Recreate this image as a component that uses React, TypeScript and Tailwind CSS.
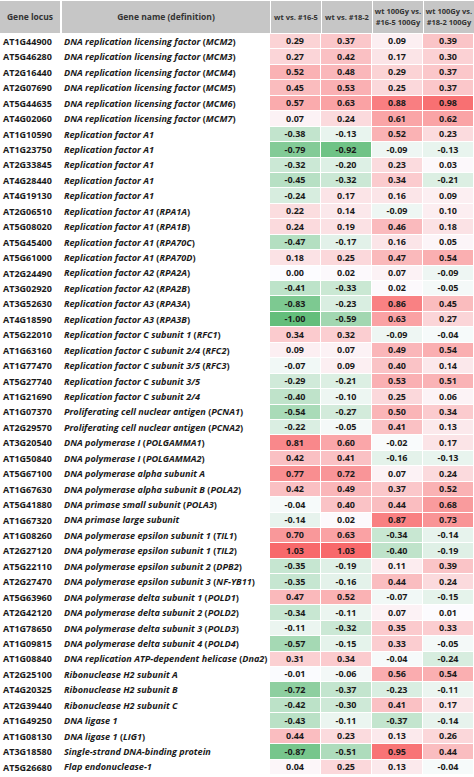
import React from "react";

type Row = [string, string, string | null, number[]];

const rows: Row[] = [
  ["AT1G44900", "DNA replication licensing factor", "MCM2", [0.29, 0.37, 0.09, 0.39]],
  ["AT5G46280", "DNA replication licensing factor", "MCM3", [0.27, 0.42, 0.17, 0.3]],
  ["AT2G16440", "DNA replication licensing factor", "MCM4", [0.52, 0.48, 0.29, 0.37]],
  ["AT2G07690", "DNA replication licensing factor", "MCM5", [0.45, 0.53, 0.25, 0.37]],
  ["AT5G44635", "DNA replication licensing factor", "MCM6", [0.57, 0.63, 0.88, 0.98]],
  ["AT4G02060", "DNA replication licensing factor", "MCM7", [0.07, 0.24, 0.61, 0.62]],
  ["AT1G10590", "Replication factor A1", null, [-0.38, -0.13, 0.52, 0.23]],
  ["AT1G23750", "Replication factor A1", null, [-0.79, -0.92, -0.09, -0.13]],
  ["AT2G33845", "Replication factor A1", null, [-0.32, -0.2, 0.23, 0.03]],
  ["AT4G28440", "Replication factor A1", null, [-0.45, -0.32, 0.34, -0.21]],
  ["AT4G19130", "Replication factor A1", null, [-0.24, 0.17, 0.16, 0.09]],
  ["AT2G06510", "Replication factor A1", "RPA1A", [0.22, 0.14, -0.09, 0.1]],
  ["AT5G08020", "Replication factor A1", "RPA1B", [0.24, 0.19, 0.46, 0.18]],
  ["AT5G45400", "Replication factor A1", "RPA70C", [-0.47, -0.17, 0.16, 0.05]],
  ["AT5G61000", "Replication factor A1", "RPA70D", [0.18, 0.25, 0.47, 0.54]],
  ["AT2G24490", "Replication factor A2", "RPA2A", [0.0, 0.02, 0.07, -0.09]],
  ["AT3G02920", "Replication factor A2", "RPA2B", [-0.41, -0.33, 0.02, -0.05]],
  ["AT3G52630", "Replication factor A3", "RPA3A", [-0.83, -0.23, 0.86, 0.45]],
  ["AT4G18590", "Replication factor A3", "RPA3B", [-1.0, -0.59, 0.63, 0.27]],
  ["AT5G22010", "Replication factor C subunit 1", "RFC1", [0.34, 0.32, -0.09, -0.04]],
  ["AT1G63160", "Replication factor C subunit 2/4", "RFC2", [0.09, 0.07, 0.49, 0.54]],
  ["AT1G77470", "Replication factor C subunit 3/5", "RFC3", [-0.07, 0.09, 0.4, 0.14]],
  ["AT5G27740", "Replication factor C subunit 3/5", null, [-0.29, -0.21, 0.53, 0.51]],
  ["AT1G21690", "Replication factor C subunit 2/4", null, [-0.4, -0.1, 0.25, 0.06]],
  ["AT1G07370", "Proliferating cell nuclear antigen", "PCNA1", [-0.54, -0.27, 0.5, 0.34]],
  ["AT2G29570", "Proliferating cell nuclear antigen", "PCNA2", [-0.22, -0.05, 0.41, 0.13]],
  ["AT3G20540", "DNA polymerase I", "POLGAMMA1", [0.81, 0.6, -0.02, 0.17]],
  ["AT1G50840", "DNA polymerase I", "POLGAMMA2", [0.42, 0.41, -0.16, -0.13]],
  ["AT5G67100", "DNA polymerase alpha subunit A", null, [0.77, 0.72, 0.07, 0.24]],
  ["AT1G67630", "DNA polymerase alpha subunit B", "POLA2", [0.42, 0.49, 0.37, 0.52]],
  ["AT5G41880", "DNA primase small subunit", "POLA3", [-0.04, 0.4, 0.44, 0.68]],
  ["AT1G67320", "DNA primase large subunit", null, [-0.14, 0.02, 0.87, 0.73]],
  ["AT1G08260", "DNA polymerase epsilon subunit 1", "TIL1", [0.7, 0.63, -0.34, -0.14]],
  ["AT2G27120", "DNA polymerase epsilon subunit 1", "TIL2", [1.03, 1.03, -0.4, -0.19]],
  ["AT5G22110", "DNA polymerase epsilon subunit 2", "DPB2", [-0.35, -0.19, 0.11, 0.39]],
  ["AT2G27470", "DNA polymerase epsilon subunit 3", "NF-YB11", [-0.35, -0.16, 0.44, 0.24]],
  ["AT5G63960", "DNA polymerase delta subunit 1", "POLD1", [0.47, 0.52, -0.07, -0.15]],
  ["AT2G42120", "DNA polymerase delta subunit 2", "POLD2", [-0.34, -0.11, 0.07, 0.01]],
  ["AT1G78650", "DNA polymerase delta subunit 3", "POLD3", [-0.11, -0.32, 0.35, 0.33]],
  ["AT1G09815", "DNA polymerase delta subunit 4", "POLD4", [-0.57, -0.15, 0.33, -0.05]],
  ["AT1G08840", "DNA replication ATP-dependent helicase", "Dna2", [0.31, 0.34, -0.04, -0.24]],
  ["AT2G25100", "Ribonuclease H2 subunit A", null, [-0.01, -0.06, 0.56, 0.54]],
  ["AT4G20325", "Ribonuclease H2 subunit B", null, [-0.72, -0.37, -0.23, -0.11]],
  ["AT2G39440", "Ribonuclease H2 subunit C", null, [-0.42, -0.3, 0.41, 0.17]],
  ["AT1G49250", "DNA ligase 1", null, [-0.43, -0.11, -0.37, -0.14]],
  ["AT1G08130", "DNA ligase 1", "LIG1", [0.44, 0.23, 0.13, 0.26]],
  ["AT3G18580", "Single-strand DNA-binding protein", null, [-0.87, -0.51, 0.95, 0.44]],
  ["AT5G26680", "Flap endonuclease-1", null, [0.04, 0.25, 0.13, -0.04]],
];

const WHITE = [252, 252, 255];
const RED = [248, 105, 107];
const GREEN = [99, 190, 123];

function colorFor(v: number): string {
  let target = RED;
  let t = v / 1.03;
  if (v < 0) {
    target = GREEN;
    t = -v / 1.0;
  }
  t = Math.max(0, Math.min(1, t));
  const c = WHITE.map((w, i) => Math.round(w + (target[i] - w) * t));
  return `rgb(${c[0]},${c[1]},${c[2]})`;
}

const font = { fontFamily: '"Open Sans", "Noto Sans", Arial, sans-serif' };

export default function App() {
  return (
    <div className="w-[474px] h-[777px] bg-white overflow-hidden text-[#1a1a1a]" style={font}>
      {/* header */}
      <div className="flex h-[33px] gap-px pt-px font-bold text-[#333]">
        <div className="w-[60px] bg-[#c6c6c6] flex items-center justify-center text-[8.5px]">Gene locus</div>
        <div className="w-[208px] ml-px bg-[#c6c6c6] flex items-center justify-center text-[8.5px]">Gene name (definition)</div>
        <div className="w-[50px] bg-[#c6c6c6] flex items-center justify-center text-[7.5px] leading-[11px] text-center whitespace-nowrap">wt vs. #16-5</div>
        <div className="w-[50px] bg-[#c6c6c6] flex items-center justify-center text-[7.5px] leading-[11px] text-center whitespace-nowrap">wt vs. #18-2</div>
        <div className="w-[50px] bg-[#c6c6c6] flex items-center justify-center text-[7.5px] leading-[11px] text-center whitespace-nowrap">wt 100Gy vs.<br />#16-5 100Gy</div>
        <div className="w-[50px] bg-[#c6c6c6] flex items-center justify-center text-[7.5px] leading-[11px] text-center whitespace-nowrap">wt 100Gy vs.<br />#18-2 100Gy</div>
      </div>
      <div className="h-px" />
      {rows.map(([locus, name, sym, vals]) => (
        <div key={locus + name + sym} className="flex h-[15.45px] items-stretch">
          <div className="w-[62px] pl-[3px] flex items-center text-[9px] font-bold whitespace-nowrap">{locus}</div>
          <div className="w-[208px] pl-[2px] flex items-center text-[9.1px] font-bold italic whitespace-nowrap overflow-visible">
            <span>
              {name}
              {sym && (
                <>
                  {" "}
                  <span className="not-italic">(</span>
                  {sym}
                  <span className="not-italic">)</span>
                </>
              )}
            </span>
          </div>
          {vals.map((v, i) => (
            <div
              key={i}
              className="w-[50px] mr-px border-b border-white flex items-center justify-center text-[9px] font-bold"
              style={{ backgroundColor: colorFor(v) }}
            >
              {v.toFixed(2)}
            </div>
          ))}
        </div>
      ))}
    </div>
  );
}
